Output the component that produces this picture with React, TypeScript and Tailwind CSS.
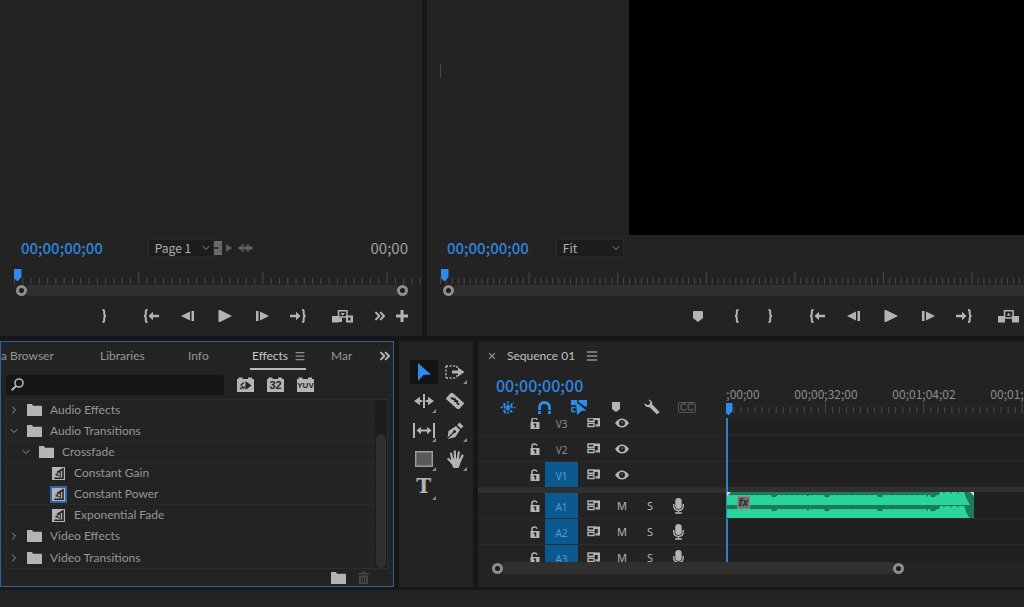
import type { ReactNode } from "react";
import { clsx } from "clsx";
import { ChevronDown, ChevronRight, ChevronsRight, Menu, X } from "lucide-react";

const TREE = [
  { label: "Audio Effects", kind: "folder", depth: 0, open: false },
  { label: "Audio Transitions", kind: "folder", depth: 0, open: true },
  { label: "Crossfade", kind: "folder", depth: 1, open: true },
  { label: "Constant Gain", kind: "effect", depth: 2 },
  { label: "Constant Power", kind: "effect", depth: 2, isDefault: true },
  { label: "Exponential Fade", kind: "effect", depth: 2 },
  { label: "Video Effects", kind: "folder", depth: 0, open: false },
  { label: "Video Transitions", kind: "folder", depth: 0, open: false },
];

const INDENT = ["pl-0", "pl-3", "pl-6"];

const VIDEO_TRACKS = [
  { name: "V3", targeted: false },
  { name: "V2", targeted: false },
  { name: "V1", targeted: true },
];

const AUDIO_TRACKS = ["A1", "A2", "A3"];

/* ---------- icons ---------- */

function Glyph({ w, h, children, className }: { w: number; h: number; children: ReactNode; className?: string }) {
  return (
    <svg width={w} height={h} viewBox={`0 0 ${w} ${h}`} fill="currentColor" className={clsx("shrink-0", className)} aria-hidden="true">
      {children}
    </svg>
  );
}

const LEFT_BRACE = "M4.5 1H4Q2.8 1 2.8 2.3V5Q2.8 6.6 1.2 7Q2.8 7.4 2.8 9V11.7Q2.8 13 4 13H4.5";
const RIGHT_BRACE = "M0.5 1H1Q2.2 1 2.2 2.3V5Q2.2 6.6 3.8 7Q2.2 7.4 2.2 9V11.7Q2.2 13 1 13H0.5";

const BraceOpen = () => (
  <Glyph w={5} h={14}>
    <path d={LEFT_BRACE} fill="none" stroke="currentColor" strokeWidth="2" />
  </Glyph>
);

const BraceClose = () => (
  <Glyph w={5} h={14}>
    <path d={RIGHT_BRACE} fill="none" stroke="currentColor" strokeWidth="2" />
  </Glyph>
);

const GoToIn = () => (
  <Glyph w={16} h={14}>
    <path d={LEFT_BRACE} fill="none" stroke="currentColor" strokeWidth="2" />
    <path d="M5.5 7L10 2.8V5.7H16V8.3H10V11.2Z" />
  </Glyph>
);

const GoToOut = () => (
  <Glyph w={16} h={14}>
    <path d={RIGHT_BRACE} transform="translate(11.5 0)" fill="none" stroke="currentColor" strokeWidth="2" />
    <path d="M10.5 7L6 2.8V5.7H0V8.3H6V11.2Z" />
  </Glyph>
);

const StepBack = () => (
  <Glyph w={14} h={10}>
    <path d="M0 5L9 0.5V9.5ZM10.5 0H13V10H10.5Z" />
  </Glyph>
);

const StepForward = () => (
  <Glyph w={14} h={10}>
    <path d="M14 5L5 0.5V9.5ZM1 0H3.5V10H1Z" />
  </Glyph>
);

const Play = () => (
  <Glyph w={14} h={12}>
    <path d="M0.5 0H2L14 6L2 12H0.5Z" />
  </Glyph>
);

const Insert = () => (
  <Glyph w={22} h={13}>
    <path d="M0 6H7V12.5H0ZM14 5.5H21V12.5H14Z" />
    <path d="M6.5 0.8H15V7H6.5Z" fill="none" stroke="currentColor" strokeWidth="1.5" />
    <path d="M8.5 3H13L10.7 5.8ZM7 8H10V12H7Z" />
    <path d="M16 7.5H18.5V10.5H16Z" fill="#232323" />
  </Glyph>
);

const Lift = () => (
  <Glyph w={22} h={13}>
    <path d="M0 6H7V12.5H0ZM14 6H21V12.5H14Z" />
    <path d="M6.5 0.8H15V8H6.5Z" fill="none" stroke="currentColor" strokeWidth="1.5" />
    <path d="M8.5 5.5L10.7 3L13 5.5Z" />
  </Glyph>
);

const MarkerIcon = () => (
  <Glyph w={10} h={11}>
    <path d="M0 1Q0 0 1 0H9Q10 0 10 1V7L5 11L0 7Z" />
  </Glyph>
);

const FolderIcon = () => (
  <Glyph w={15} h={12}>
    <path d="M0 0H5L6 1.7H14.2Q15 1.7 15 2.5V12H0Z" />
  </Glyph>
);

const TransitionIcon = () => (
  <Glyph w={13} h={13}>
    <path d="M0 0H13V13H0Z" />
    <path d="M2.2 11.3H11V2L5 5.5" fill="none" stroke="#232323" strokeWidth="1.6" />
    <path d="M3.5 6.5H5.5L9 3.8V10.3L5.5 8.8H3.5Z" fill="#3a3a3a" />
    <path d="M6.2 6.3H8V8.3H6.2Z" />
  </Glyph>
);

const Badge = ({ children }: { children?: ReactNode }) => (
  <span className="relative flex h-[15px] w-[17px] items-center justify-center text-[#b4b4b4]">
    <Glyph w={17} h={15} className="absolute inset-0">
      <path d="M0 2H1.5V0.5H5.5V2H11V0.5H15V2H17V15H0Z" />
    </Glyph>
    <span className="relative pt-0.5 font-['Liberation_Sans'] text-[9px] font-bold leading-none text-[#232323]">{children}</span>
  </span>
);

const LockIcon = () => (
  <Glyph w={10} h={12}>
    <path d="M2 5.5V3Q2 1 4.4 1Q6.8 1 6.8 2.8" fill="none" stroke="currentColor" strokeWidth="1.5" />
    <path d="M0.5 5H9.5V12H0.5Z" />
    <path d="M3.5 6.5H6.2V10.5H4.7V8H3.5Z" fill="#232323" />
  </Glyph>
);

const SyncLockIcon = () => (
  <Glyph w={14} h={11}>
    <path d="M1 1H7V4.2H1ZM1 6.3H7V9.5H1Z" fill="none" stroke="currentColor" strokeWidth="1.4" />
    <path d="M7 0.5H13V9.5H8.5V7.2H10.8V3H7Z" />
  </Glyph>
);

const EyeIcon = () => (
  <Glyph w={14} h={10}>
    <path d="M0 5Q3 0.5 7 0.5Q11 0.5 14 5Q11 9.5 7 9.5Q3 9.5 0 5Z" />
    <circle cx="7" cy="5" r="3" fill="#232323" />
    <path d="M6.2 3.5H8V5.2H6.2Z" fillOpacity="0.4" />
  </Glyph>
);

const MicIcon = () => (
  <Glyph w={11} h={16}>
    <rect x="2.3" y="0" width="6.4" height="11" rx="3.2" />
    <path d="M0.8 6V8Q0.8 12.4 5.5 12.4Q10.2 12.4 10.2 8V6M5.5 12.4V15M2 15H9" fill="none" stroke="currentColor" strokeWidth="1.4" />
  </Glyph>
);

/* ---------- shared bits ---------- */

function IconButton({ label, className, children }: { label: string; className?: string; children: ReactNode }) {
  return (
    <button type="button" aria-label={label} className={clsx("flex shrink-0 items-center justify-center", className)}>
      {children}
    </button>
  );
}

type RulerProps = { start: number; major: number; step: number };

function Ruler({ start, major, step }: RulerProps) {
  const ticks = Array.from({ length: 240 }, (_, i) => i);
  return (
    <svg className="block w-full text-[#4a4a4a]" height="16" aria-hidden="true">
      {ticks.map((i) => {
        const isMajor = i > 0 && i % step === 0;
        const x = start + (i * major) / step;
        return <path key={i} d={`M${x} ${isMajor ? 3 : 9}V15`} stroke="currentColor" strokeWidth="1" />;
      })}
    </svg>
  );
}

const Playhead = () => (
  <Glyph w={8} h={12} className="text-[#2d8ceb]">
    <path d="M0 0H7.5V8L4 12H3L0 9Z" />
  </Glyph>
);

const Knob = () => <span className="size-[11px] shrink-0 rounded-full border-[3px] border-[#8e8e8e] bg-[#1c1c1c]" />;

function Dropdown({ id, options, className }: { id: string; options: string[]; className: string }) {
  return (
    <label htmlFor={id} className={clsx("relative flex h-[18px] items-center", className)}>
      <select
        id={id}
        aria-label={id}
        className="h-full w-full appearance-none border border-[#2a2a2a] bg-[#1d1d1d] pl-1.5 text-[12px] leading-4 text-[#b0b0b0]"
      >
        {options.map((o) => (
          <option key={o}>{o}</option>
        ))}
      </select>
      <ChevronDown className="absolute right-0.5 size-3 text-[#8a8a8a]" strokeWidth={2} />
    </label>
  );
}

function TransportCore() {
  return (
    <>
      <IconButton label="Go to in" className="h-6 w-[37px]"><GoToIn /></IconButton>
      <IconButton label="Step back" className="h-6 w-[37px]"><StepBack /></IconButton>
      <IconButton label="Play" className="h-6 w-[37px]"><Play /></IconButton>
      <IconButton label="Step forward" className="h-6 w-[37px]"><StepForward /></IconButton>
      <IconButton label="Go to out" className="h-6 w-[35px]"><GoToOut /></IconButton>
    </>
  );
}

/* ---------- monitors ---------- */

function SourceMonitor() {
  return (
    <section className="flex w-[422px] shrink-0 flex-col bg-[#232323]">
      <div className="flex-1" />
      <div className="mb-2 flex h-[26px] items-center pl-[21px] pr-3.5">
        <span className="text-[15px] font-medium leading-5 text-[#2d86de]">00;00;00;00</span>
        <Dropdown id="Page" options={["Page 1"]} className="ml-[45px] w-[66px]" />
        <span className="-ml-1 flex items-center gap-1 text-[#6a6a6a]">
          <Glyph w={12} h={14}>
            <path d="M0 0H12V14H0Z" />
            <path d="M1 3H2V4H1ZM10 3H11V4H10ZM1 10H2V11H1ZM10 10H11V11H10ZM3.5 6H8.5V8H3.5Z" fill="#333" />
          </Glyph>
          <Glyph w={6} h={8}>
            <path d="M0 0L6 4L0 8Z" fillOpacity="0.8" />
          </Glyph>
          <Glyph w={15} h={10} className="ml-0.5">
            <path d="M0 5H15M2.5 3V7M5 1V9M8 3V7M10 1V9M12.5 3V7" fill="none" stroke="currentColor" strokeWidth="1.4" />
          </Glyph>
        </span>
        <span className="ml-auto text-[15px] leading-5 text-[#a0a0a0]">00;00</span>
      </div>
      <div className="relative">
        <Ruler start={14.5} major={124.2} step={15} />
        <span className="absolute left-3.5 top-0"><Playhead /></span>
      </div>
      <div className="flex h-[11px] items-center justify-between pl-4 pr-3.5">
        <Knob />
        <span className="h-full flex-1 bg-[#303030]" />
        <Knob />
      </div>
      <div className="flex h-10 items-center pl-[92px] pr-2.5 text-[#b4b4b4]">
        <IconButton label="Mark out" className="mr-4 h-6 w-6"><BraceClose /></IconButton>
        <TransportCore />
        <IconButton label="Insert" className="ml-3 h-6 w-8"><Insert /></IconButton>
        <IconButton label="More" className="ml-auto h-6 w-6"><ChevronsRight className="size-4" strokeWidth={3} /></IconButton>
        <IconButton label="Add button" className="h-6 w-5">
          <Glyph w={12} h={12}><path d="M4.5 0H7.5V4.5H12V7.5H7.5V12H4.5V7.5H0V4.5H4.5Z" /></Glyph>
        </IconButton>
      </div>
    </section>
  );
}

function ProgramMonitor() {
  return (
    <section className="flex min-w-0 flex-1 flex-col overflow-hidden bg-[#232323]">
      <div className="flex flex-1">
        <div className="w-[202px] shrink-0 pl-[13px] pt-16">
          <div className="h-3.5 w-px bg-[#454545]" />
        </div>
        <div className="flex-1 bg-black" />
      </div>
      <div className="mb-2 flex h-[26px] items-center pl-5">
        <span className="text-[15px] font-medium leading-5 text-[#2d86de]">00;00;00;00</span>
        <Dropdown id="Fit" options={["Fit"]} className="ml-[27px] w-[68px]" />
      </div>
      <div className="relative">
        <Ruler start={13.5} major={88.6} step={15} />
        <span className="absolute left-3.5 top-0"><Playhead /></span>
      </div>
      <div className="flex h-[11px] items-center pl-4">
        <Knob />
        <span className="h-full flex-1 bg-[#303030]" />
      </div>
      <div className="flex h-10 items-center pl-[259px] text-[#b4b4b4]">
        <IconButton label="Add marker" className="mr-3.5 h-6 w-6"><MarkerIcon /></IconButton>
        <IconButton label="Mark in" className="mr-2.5 h-6 w-6"><BraceOpen /></IconButton>
        <IconButton label="Mark out" className="mr-4 h-6 w-6"><BraceClose /></IconButton>
        <TransportCore />
        <IconButton label="Lift" className="ml-3 h-6 w-8"><Lift /></IconButton>
      </div>
    </section>
  );
}

/* ---------- effects ---------- */

function EffectsPanel() {
  return (
    <section className="flex w-[394px] shrink-0 flex-col border border-[#2f649b] bg-[#232323] font-['Lato',sans-serif] text-[12px] text-[#969696]">
      <nav className="flex h-7 shrink-0 items-center">
        <button type="button" className="w-[99px] text-left">a Browser</button>
        <button type="button" className="w-[88px] text-left">Libraries</button>
        <button type="button" className="w-[62px] text-left">Info</button>
        <button type="button" className="flex h-full w-14 items-center justify-between border-b-2 border-[#b8b8b8] pl-0.5 pt-0.5 text-[#c8c8c8]">
          Effects
          <Menu className="size-3 text-[#909090]" strokeWidth={2.5} />
        </button>
        <button type="button" className="ml-[25px]">Mar</button>
        <IconButton label="More tabs" className="ml-auto"><ChevronsRight className="size-4 text-[#b4b4b4]" strokeWidth={3} /></IconButton>
      </nav>
      <div className="flex h-[29px] shrink-0 items-center gap-[13px] pl-[5px]">
        <label htmlFor="search" className="flex h-5 w-[218px] items-center rounded-xs bg-[#161616] pl-[5px]">
          <Glyph w={13} h={13} className="text-[#b4b4b4]">
            <circle cx="8" cy="5" r="4" fill="none" stroke="currentColor" strokeWidth="1.6" />
            <path d="M5.3 7.7L0.7 12.3" stroke="currentColor" strokeWidth="2" />
          </Glyph>
          <input id="search" type="text" aria-label="Search effects" className="min-w-0 flex-1 bg-transparent outline-none" />
        </label>
        <IconButton label="Accelerated effects">
          <Badge>
            <Glyph w={13} h={9}>
              <path d="M6.5 0L12.5 4.5L6.5 9Z" />
              <path d="M1 8L4 5M1.5 4.5L5 1.5M3.5 8L6 5.5" stroke="currentColor" strokeWidth="1.2" />
            </Glyph>
          </Badge>
        </IconButton>
        <IconButton label="32-bit color"><Badge><span className="text-[11px]">32</span></Badge></IconButton>
        <IconButton label="YUV effects"><Badge><span className="text-[8px]">YUV</span></Badge></IconButton>
      </div>
      <div className="mx-[5px] flex border border-[#2e2e2e]">
        <ul className="flex-1">
          {TREE.map((item) => (
            <li
              key={item.label}
              className={clsx("flex h-[21px] items-center border-b border-[#292929] last:border-b-0", INDENT[item.depth])}
            >
              <span className="flex w-5 justify-start pl-px">
                {item.kind === "folder" &&
                  (item.open ? <ChevronDown className="size-3" /> : <ChevronRight className="size-3" />)}
              </span>
              <span className="flex w-[15px] justify-center text-[#b4b4b4]">
                {item.kind === "folder" ? (
                  <FolderIcon />
                ) : (
                  <span className={clsx(item.isDefault && "outline-2 outline-[#2f68a8]")}><TransitionIcon /></span>
                )}
              </span>
              <span className="pl-2 leading-4">{item.label}</span>
            </li>
          ))}
        </ul>
        <div className="flex w-3 flex-col bg-[#1d1d1d] pt-[34px]">
          <div className="mx-px flex-1 rounded-full bg-[#303030]" />
        </div>
      </div>
      <div className="flex flex-1 items-center justify-end gap-3 pr-6">
        <IconButton label="New custom bin" className="text-[#b4b4b4]"><FolderIcon /></IconButton>
        <IconButton label="Delete" className="text-[#454545]">
          <Glyph w={11} h={13}>
            <path d="M0 2H3.5V0.5H7.5V2H11V3.5H0ZM1 4.5H10V13H1Z" />
            <path d="M3.5 6V11.5M5.5 6V11.5M7.5 6V11.5" stroke="#232323" strokeWidth="0.8" />
          </Glyph>
        </IconButton>
      </div>
    </section>
  );
}

/* ---------- tools ---------- */

const TOOLS: { name: string; more?: boolean; icon: ReactNode }[] = [
  { name: "Selection", icon: <Glyph w={14} h={18} className="text-[#2d8ceb]"><path d="M1 0L14 11.5L6.5 12L1 18Z" /></Glyph> },
  {
    name: "Track select",
    more: true,
    icon: (
      <Glyph w={20} h={14}>
        <path d="M1 1H12M1 13H12M1 1V13M12 1V4M12 10V13" fill="none" stroke="currentColor" strokeWidth="1.5" strokeDasharray="2 1.6" />
        <path d="M7 5.5H13V2.5L19.5 7L13 11.5V8.5H7Z" />
      </Glyph>
    ),
  },
  {
    name: "Ripple edit",
    more: true,
    icon: (
      <Glyph w={20} h={14}>
        <path d="M9 0H11V14H9ZM0 7L6 2.8V6H8.2V8H6V11.2ZM20 7L14 2.8V6H11.8V8H14V11.2Z" />
      </Glyph>
    ),
  },
  {
    name: "Razor",
    icon: (
      <Glyph w={18} h={16}>
        <g transform="rotate(42 9 8)">
          <path d="M0.5 3.5H17.5V12.5H0.5Z" />
          <path d="M3.5 8H6L7 6.8H8L9 8L10 6.8H11L12 8H14.5" fill="none" stroke="#232323" strokeWidth="1.8" />
        </g>
      </Glyph>
    ),
  },
  {
    name: "Slip",
    more: true,
    icon: (
      <Glyph w={22} h={15}>
        <path d="M0 0H2V15H0ZM20 0H22V15H20ZM3.5 7.5L8 3.8V6.6H14V3.8L18.5 7.5L14 11.2V8.4H8V11.2Z" />
      </Glyph>
    ),
  },
  {
    name: "Pen",
    more: true,
    icon: (
      <Glyph w={17} h={17}>
        <path d="M0.5 16.5L1.5 9L9 4L13 8L8.5 15L1 17Z" />
        <path d="M10.2 3L12.5 0.5L16.5 4.5L14 6.8Z" />
        <path d="M0 17L7 10" stroke="#232323" strokeWidth="1.2" />
        <circle cx="7.5" cy="9.5" r="1.5" fill="#232323" />
      </Glyph>
    ),
  },
  {
    name: "Rectangle",
    more: true,
    icon: <Glyph w={18} h={16}><path d="M0.7 0.7H17.3V15.3H0.7Z" fill="#5a5a5a" stroke="#9c9c9c" strokeWidth="1.4" /></Glyph>,
  },
  {
    name: "Hand",
    more: true,
    icon: (
      <Glyph w={17} h={18}>
        <path d="M5.5 10L4 3.5M8 9L7.8 1.3M10.7 9.5L11.8 2.3M13 11L15.5 5.5M5.5 13L1.3 9" fill="none" stroke="currentColor" strokeWidth="2.2" strokeLinecap="round" />
        <path d="M4.5 8.5H12.5L14 10.5Q13 15.5 11.5 18H6.5Q5.5 15 3 12Z" />
      </Glyph>
    ),
  },
  { name: "Type", more: true, icon: <span className="pb-1 font-['DejaVu_Serif'] text-[20px] font-bold leading-5">T</span> },
];

function ToolsPanel() {
  return (
    <section className="w-[74px] shrink-0 bg-[#232323] pt-[19px]">
      <div className="ml-[11px] grid w-[59px] grid-cols-2 gap-x-1 gap-y-[5px] text-[#b4b4b4]">
        {TOOLS.map((tool, i) => (
          <IconButton key={tool.name} label={tool.name} className={clsx("relative h-6", i === 0 && "bg-[#141414]")}>
            {tool.icon}
            {tool.more && (
              <span className="absolute bottom-0 right-0.5">
                <Glyph w={4} h={4}><path d="M4 0V4H0Z" fill="#8a8a8a" /></Glyph>
              </span>
            )}
          </IconButton>
        ))}
      </div>
    </section>
  );
}

/* ---------- timeline ---------- */

function TrackHeader({ name, targeted, audio }: { name: string; targeted: boolean; audio?: boolean }) {
  return (
    <div className="flex h-[26px] shrink-0 items-center border-b border-[#2d2d2d] pl-[51px] text-[#b4b4b4]">
      <IconButton label={`Lock ${name}`} className="w-3"><LockIcon /></IconButton>
      <button
        type="button"
        className={clsx(
          "ml-1 h-[25px] w-[33px] pt-1 font-['Noto_Sans'] text-[10px]",
          targeted ? "bg-[#0b5a8f] text-[#5c9cc4]" : "text-[#8a8a8a]",
        )}
      >
        {name}
      </button>
      <IconButton label={`Sync lock ${name}`} className="w-8"><SyncLockIcon /></IconButton>
      {audio ? (
        <>
          <button type="button" className="w-6 pt-0.5 font-['Noto_Sans'] text-[11px]">M</button>
          <button type="button" className="ml-1 w-6 pt-0.5 font-['Noto_Sans'] text-[11px]">S</button>
          <IconButton label={`Voice-over ${name}`} className="ml-1 w-6"><MicIcon /></IconButton>
        </>
      ) : (
        <IconButton label={`Show ${name}`} className="w-6"><EyeIcon /></IconButton>
      )}
    </div>
  );
}

// upper edge of one channel: small dips along the clip, a loud tail, then a fade
function channelPath(top: number, bottom: number) {
  const points: string[] = [`M0 ${bottom}`];
  for (let x = 0; x <= 247; x += 1) {
    let y = top + 3 + ((x * 7) % 5 === 0 ? 0.6 : 0);
    if (x % 53 > 44 && x % 53 < 50) y += 2;
    if (x === 81 || x === 200) y += 2;
    if (x > 212) y = top + ((x * 5) % 7 < 1 ? 2 : 0);
    if (x > 238) y = top + 4 + (x - 238) * 1.8;
    points.push(`L${x} ${Math.min(y, bottom)}`);
  }
  points.push(`L247 ${bottom}Z`);
  return points.join("");
}

function AudioClip() {
  return (
    <div className="relative h-[26px] w-[247px] overflow-hidden bg-[#1d7a58]">
      <svg width="247" height="26" className="block" aria-hidden="true">
        <path d={channelPath(0, 13)} fill="#2bd49a" />
        <path d={channelPath(14, 26)} fill="#2bd49a" />
        <path d="M0 13.5H247" stroke="#1d7a58" strokeWidth="1" />
        <path d="M0 0H4L0 4ZM247 0H243L247 4Z" fill="#d8d8d8" />
      </svg>
      <span className="absolute left-2.5 top-1 flex size-[13px] items-center justify-center border border-[#8a8a8a] bg-[#6e6e6e] font-['Liberation_Sans'] text-[10px] font-bold italic leading-none text-[#262626]">
        fx
      </span>
    </div>
  );
}

function Timeline() {
  return (
    <section className="flex min-w-0 flex-1 flex-col overflow-hidden bg-[#232323]">
      <div className="flex h-[30px] shrink-0 items-center pl-[9px] font-['Lato',sans-serif] text-[12px] text-[#c0c0c0]">
        <IconButton label="Close sequence"><X className="size-2.5 text-[#8a8a8a]" strokeWidth={3} /></IconButton>
        <span className="ml-2.5 mr-2.5">Sequence 01</span>
        <Menu className="size-3.5 text-[#909090]" strokeWidth={2.5} />
      </div>
      <div className="flex h-[47px] shrink-0">
        <div className="w-[248px] shrink-0 pl-[18px] pt-0.5">
          <div className="mb-0.5 text-[16px] font-medium leading-6 text-[#2d86de]">00;00;00;00</div>
          <div className="flex h-4 items-center text-[#b4b4b4]">
            <IconButton label="Nest sequences" className="w-6 text-[#2d8ceb]">
              <Glyph w={16} h={15}>
                <path d="M8 7V0.5M8 7.5L3 2.5M8 7.5L13.5 2.5M0.5 7.5H15.5M8 8L2.5 12M8 8V14.5M8 8L13 13M3.5 4.5L5.5 8M12 5L10.5 8M5 11V14M11 10V13" fill="none" stroke="currentColor" strokeWidth="1.6" strokeDasharray="2.4 1" />
              </Glyph>
            </IconButton>
            <IconButton label="Snap" className="ml-3 w-6 text-[#2d8ceb]">
              <Glyph w={13} h={13}>
                <path d="M1.5 13V7Q1.5 1.5 6.5 1.5Q11.5 1.5 11.5 7V13" fill="none" stroke="currentColor" strokeWidth="2.8" />
                <path d="M0 9H3V10H0ZM10 9H13V10H10Z" fill="#232323" />
              </Glyph>
            </IconButton>
            <IconButton label="Linked selection" className="ml-[11px] w-6 text-[#2d8ceb]">
              <Glyph w={16} h={15}>
                <path d="M0 0H6V5H0ZM7.5 0H16V6.5H14L7.5 2Z" />
                <path d="M5 2L15.5 10.5L10.5 11L6 15Z" />
                <path d="M0.7 7.5H4.5M0.7 11.5H4.5M0.7 7.5V11.5" fill="none" stroke="currentColor" strokeWidth="1.4" />
              </Glyph>
            </IconButton>
            <IconButton label="Add marker" className="ml-[13px] w-6">
              <Glyph w={8} h={10}><path d="M0 0H8V7L4 10L0 7Z" /></Glyph>
            </IconButton>
            <IconButton label="Timeline settings" className="ml-3 w-6">
              <Glyph w={16} h={16}>
                <path d="M0.5 4Q0.5 8.5 5.5 8.3L13 15.6L15.6 13L8.3 5.5Q8.5 0.8 4 0.5L6.3 3L5.6 5.4L3.2 6.1Z" />
              </Glyph>
            </IconButton>
            <IconButton label="Captions" className="ml-[11px] w-6">
              <span className="rounded-xs border border-[#555] px-px font-['Liberation_Sans'] text-[10px] font-bold leading-[9px] text-[#555]">CC</span>
            </IconButton>
          </div>
        </div>
        <div className="relative flex-1 overflow-hidden pt-[15px]">
          <div className="-ml-[47px] flex text-[12px] leading-4 text-[#8c8c8c]">
            {["00;00;00;00", "00;00;32;00", "00;01;04;02", "00;01;36;02"].map((t) => (
              <span key={t} className="w-[98px] shrink-0 text-center">{t}</span>
            ))}
          </div>
          <div className="-mt-1">
            <Ruler start={1} major={98.4} step={14} />
          </div>
          <span className="absolute -left-px top-8"><Playhead /></span>
        </div>
      </div>
      <div className="flex h-36 shrink-0 overflow-hidden">
        <div className="w-[248px] shrink-0">
          <div className="flex h-[70px] flex-col justify-end overflow-hidden">
            {VIDEO_TRACKS.map((t) => (
              <TrackHeader key={t.name} {...t} />
            ))}
          </div>
          <div className="h-[5px] bg-[#303030]" />
          {AUDIO_TRACKS.map((name) => (
            <TrackHeader key={name} name={name} targeted audio />
          ))}
        </div>
        <div className="flex-1 border-l-2 border-[#2d7fd0] bg-[#202020]">
          <div className="flex h-[69px] flex-col justify-end">
            <div className="h-[17px] border-b border-[#2b2b2b]" />
            <div className="h-[26px] border-b border-[#2b2b2b]" />
            <div className="h-[26px]" />
          </div>
          <div className="h-[5px] bg-[#303030]" />
          <div className="-ml-px h-[27px] border-b border-[#2b2b2b]"><AudioClip /></div>
          <div className="h-[26px] border-b border-[#2b2b2b]" />
        </div>
      </div>
      <div className="flex h-3 items-center pl-3.5">
        <Knob />
        <span className="h-full w-[390px] bg-[#303030]" />
        <Knob />
      </div>
    </section>
  );
}

export default function App() {
  return (
    <main className="flex min-h-screen flex-col bg-[#171717] font-['Noto_Sans_CJK_SC',sans-serif]">
      <div className="flex flex-1 gap-[5px]">
        <SourceMonitor />
        <ProgramMonitor />
      </div>
      <div className="mt-[5px] flex h-[246px] shrink-0 gap-[5px]">
        <EffectsPanel />
        <ToolsPanel />
        <Timeline />
      </div>
      <footer className="mt-[3px] h-[17px] shrink-0 bg-[#232323]" />
    </main>
  );
}
